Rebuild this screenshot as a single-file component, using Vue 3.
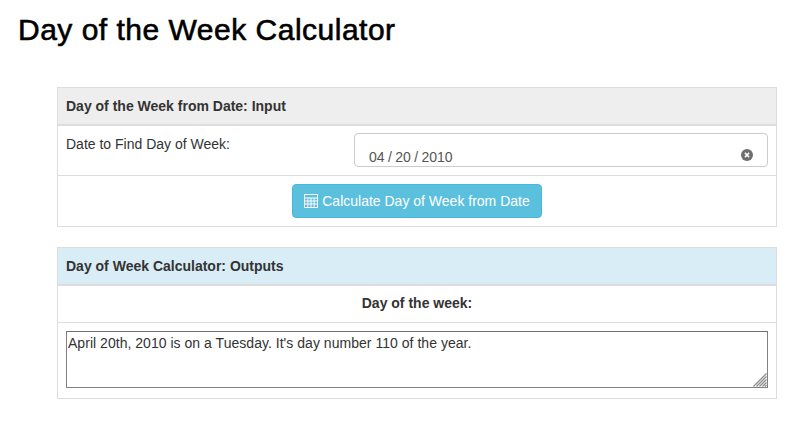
<template>
  <div class="page">
    <h1 class="title">Day of the Week Calculator</h1>

    <div class="panel">
      <div class="panel-heading">Day of the Week from Date: Input</div>
      <div class="row date-row">
        <label class="date-label">Date to Find Day of Week:</label>
        <div class="date-input">
          <span class="date-value">04 / 20 / 2010</span>
          <svg class="clear" width="12" height="12" viewBox="0 0 12 12">
            <circle cx="6" cy="6" r="6" fill="#6f6f6f" />
            <path d="M3.9 3.9l4.2 4.2M8.1 3.9l-4.2 4.2" stroke="#fff" stroke-width="1.5" />
          </svg>
        </div>
      </div>
      <div class="row button-row">
        <button class="btn-calc">
          <svg class="calc-icon" width="14" height="14" viewBox="0 0 14 14">
            <path
              fill="#fff"
              fill-rule="evenodd"
              d="M1 0h12a1 1 0 0 1 1 1v12a1 1 0 0 1-1 1H1a1 1 0 0 1-1-1V1a1 1 0 0 1 1-1zM1 1v2.5h12V1zM1 4.5V6.5h2.4v-2zM4.3 4.5v2h2.2v-2zM7.5 4.5v2h2.2v-2zM10.6 4.5v2H13v-2zM1 7.4v2.2h2.4V7.4zM4.3 7.4v2.2h2.2V7.4zM7.5 7.4v2.2h2.2V7.4zM10.6 7.4v2.2H13V7.4zM1 10.5V13h2.4v-2.5zM4.3 10.5V13h2.2v-2.5zM7.5 10.5V13h2.2v-2.5zM10.6 10.5V13H13v-2.5z"
            />
          </svg>
          Calculate Day of Week from Date
        </button>
      </div>
    </div>

    <div class="panel outputs">
      <div class="panel-heading info">Day of Week Calculator: Outputs</div>
      <div class="row result-head">Day of the week:</div>
      <div class="row result-row">
        <textarea class="result" readonly :value="result"></textarea>
        <svg class="grip" width="14" height="14" viewBox="0 0 14 14">
          <path
            d="M0.5 13.5L13.5 0.5M3.5 13.5L13.5 3.5M6.5 13.5L13.5 6.5M9.5 13.5L13.5 9.5M12 13.5L13.5 12"
            stroke="#8e8e8e"
            stroke-width="1.3"
          />
        </svg>
      </div>
    </div>
  </div>
</template>

<script setup>
const result = "April 20th, 2010 is on a Tuesday. It's day number 110 of the year."
</script>

<style>
html,
body {
  background: #fff;
}
</style>

<style scoped>
.page {
  width: 804px;
  height: 425px;
  overflow: hidden;
  font-family: "Liberation Sans", Arial, sans-serif;
  font-size: 14px;
  color: #333;
}

.title {
  margin: 0;
  padding: 12px 0 0 18px;
  height: 87px;
  box-sizing: border-box;
  font-size: 30px;
  line-height: 36px;
  font-weight: 400;
  color: #000;
  letter-spacing: 0.5px;
  -webkit-text-stroke: 0.6px #000;
}

.panel {
  width: 720px;
  margin-left: 57px;
  box-sizing: border-box;
  border: 1px solid #ddd;
}

.outputs {
  margin-top: 20px;
}

.panel-heading {
  height: 38px;
  padding-left: 8px;
  line-height: 37px;
  font-size: 14px;
  font-weight: bold;
  background: #eee;
  border-bottom: 2px solid #ddd;
  box-sizing: border-box;
}

.panel-heading.info {
  background: #d9edf7;
}

.row {
  box-sizing: border-box;
  border-top: 1px solid #ddd;
}

.panel-heading + .row {
  border-top: 0;
}

.date-row {
  display: flex;
  height: 49px;
  padding: 7px 8px 0;
}

.date-label {
  width: 288px;
  line-height: 22px;
  font-size: 14px;
}

.date-input {
  display: flex;
  align-items: flex-end;
  justify-content: space-between;
  width: 414px;
  height: 34px;
  padding: 0 14px;
  box-sizing: border-box;
  border: 1px solid #ccc;
  border-radius: 4px;
  font-size: 14px;
  color: #555;
}

.date-value {
  line-height: 17px;
  word-spacing: -0.5px;
}

.clear {
  margin: 0 0 5px;
}

.button-row {
  display: flex;
  justify-content: center;
  height: 51px;
  padding-top: 8px;
}

.btn-calc {
  display: flex;
  align-items: center;
  gap: 4px;
  height: 34px;
  padding: 0 11px;
  border: 1px solid #46b8da;
  border-radius: 4px;
  background: #5bc0de;
  color: #fff;
  font-family: inherit;
  font-size: 14px;
}

.result-head {
  height: 36px;
  line-height: 35px;
  text-align: center;
  font-size: 14px;
  font-weight: bold;
}

.result-row {
  position: relative;
  height: 76px;
  padding: 8px 8px 0;
}

.result {
  display: block;
  width: 702px;
  height: 57px;
  margin: 0;
  padding: 1px;
  box-sizing: border-box;
  border: 1px solid #808080;
  border-top-color: #6f6f6f;
  border-radius: 0;
  outline: none;
  resize: none;
  font-family: inherit;
  font-size: 14px;
  letter-spacing: 0.03px;
  line-height: 20px;
  color: #333;
}

.grip {
  position: absolute;
  right: 9px;
  bottom: 11px;
}
</style>
